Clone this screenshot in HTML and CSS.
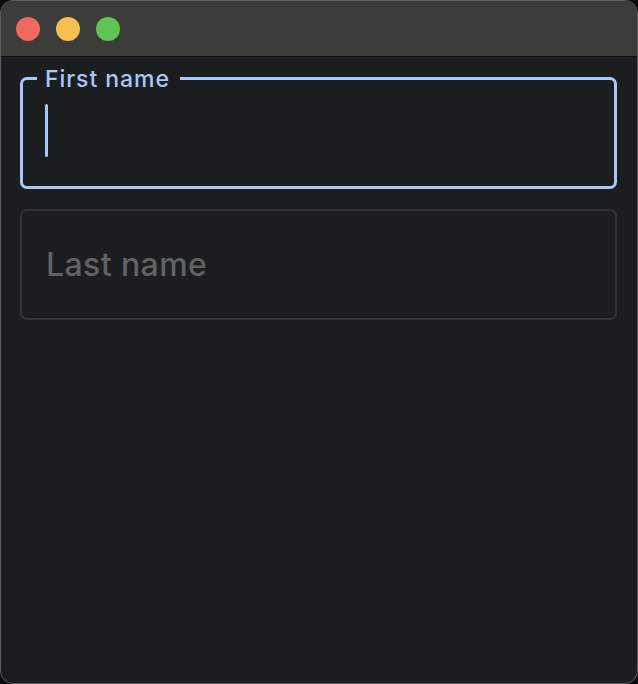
FILE: index.html
```html
<!DOCTYPE html>
<html>
<head>
<meta charset="utf-8">
<link rel="stylesheet" href="styles.css">
</head>
<body>
<div class="window">
  <div class="titlebar">
    <span class="light red"></span>
    <span class="light yellow"></span>
    <span class="light green"></span>
  </div>
  <div class="content">
    <fieldset class="field focused">
      <legend class="label">First name</legend>
      <div class="input-area"><span class="cursor"></span></div>
    </fieldset>
    <div class="field idle">
      <span class="placeholder">Last name</span>
    </div>
  </div>
</div>
</body>
</html>
```

FILE: styles.css
```css
html, body {
  margin: 0;
  padding: 0;
  background: #0c0a0f;
}
body {
  width: 638px;
  height: 684px;
  font-family: Inter, "Noto Sans", sans-serif;
}
.window {
  box-sizing: border-box;
  width: 638px;
  height: 684px;
  border: 1px solid #5c5c5e;
  border-radius: 13px;
  overflow: hidden;
  background: #1c1d1f;
  display: flex;
  flex-direction: column;
}
.titlebar {
  height: 55px;
  flex: none;
  background: #3c3d3b;
  border-bottom: 1px solid #101112;
  display: flex;
  align-items: center;
  gap: 16px;
  padding-left: 15px;
}
.light {
  width: 24px;
  height: 24px;
  border-radius: 50%;
  display: block;
}
.red { background: #ef6a5f; }
.yellow { background: #f6bf50; }
.green { background: #60c454; }

.content {
  display: flex;
  flex-direction: column;
  padding: 7.5px 20px 0 19px;
}
.field {
  box-sizing: border-box;
  margin: 0;
  min-width: 0;
}
.focused {
  border: 3px solid #a8c7fa;
  border-radius: 7px;
  padding: 0 0 0 22px;
}
.label {
  font-size: 23px;
  font-weight: 500;
  letter-spacing: 0.95px;
  line-height: 28px;
  color: #a8c7fa;
  padding: 0 10px 0 8px;
  margin-left: -8px;
}
.input-area {
  padding-top: 11.5px;
  height: 93px;
  box-sizing: border-box;
}
.cursor {
  display: block;
  width: 3px;
  height: 53px;
  background: #a8c7fa;
  border-radius: 1.5px;
}
.idle {
  margin-top: 20.5px;
  height: 111px;
  border: 2px solid #323335;
  border-radius: 7px;
  display: flex;
  align-items: center;
  padding-left: 24px;
}
.placeholder {
  font-size: 32px;
  font-weight: 500;
  letter-spacing: 0.4px;
  color: #616264;
}
```
